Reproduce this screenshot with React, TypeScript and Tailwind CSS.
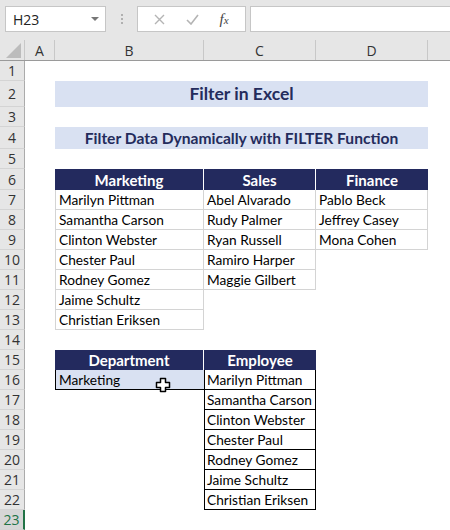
import React from "react";

const NAVY = "bg-[#232a5e]";

type Kind = "head" | "headLast" | "data" | "dataFirst" | "dept" | "emp";

interface CellDef {
  text?: string;
  kind: Kind;
}

const widths = {
  b: "w-[149px]",
  c: "w-[112px]",
  d: "w-[112px]",
};

const rowHeights: Record<number, string> = {
  2: "h-[26px]",
  4: "h-[22px]",
  6: "h-[21px]",
};

const marketing = ["Marilyn Pittman", "Samantha Carson", "Clinton Webster", "Chester Paul", "Rodney Gomez", "Jaime Schultz", "Christian Eriksen"];
const sales = ["Abel Alvarado", "Rudy Palmer", "Ryan Russell", "Ramiro Harper", "Maggie Gilbert"];
const finance = ["Pablo Beck", "Jeffrey Casey", "Mona Cohen"];

function kindClass(kind: Kind) {
  switch (kind) {
    case "head":
      return `${NAVY} text-white font-bold text-[15px] justify-center border-r border-white`;
    case "headLast":
      return `${NAVY} text-white font-bold text-[15px] justify-center`;
    case "dataFirst":
      return "border-l border-r border-b border-[#d4d4d4] pl-[3px] text-[13.7px]";
    case "data":
      return "border-r border-b border-[#d4d4d4] pl-[3px] text-[13.7px]";
    case "dept":
      return "bg-[#d9e1f2] border-l border-b border-black pl-[3px] text-[13.7px]";
    case "emp":
      return "border-l border-r border-b border-black pl-[2px] text-[13.7px]";
  }
}

function Cell({ w, def }: { w: string; def?: CellDef }) {
  const k = def ? kindClass(def.kind) : "";
  return (
    <div className={`${w} h-full flex items-center pt-[1px] shrink-0 text-black whitespace-nowrap overflow-visible ${k}`}>
      {def?.text}
    </div>
  );
}

function rowCells(r: number): { b?: CellDef; c?: CellDef; d?: CellDef } {
  if (r === 6) return { b: { text: "Marketing", kind: "head" }, c: { text: "Sales", kind: "head" }, d: { text: "Finance", kind: "headLast" } };
  if (r >= 7 && r <= 13) {
    const i = r - 7;
    return {
      b: { text: marketing[i], kind: "dataFirst" },
      c: sales[i] ? { text: sales[i], kind: "data" } : undefined,
      d: finance[i] ? { text: finance[i], kind: "data" } : undefined,
    };
  }
  if (r === 15) return { b: { text: "Department", kind: "head" }, c: { text: "Employee", kind: "headLast" } };
  if (r >= 16 && r <= 22) {
    return {
      b: r === 16 ? { text: "Marketing", kind: "dept" } : undefined,
      c: { text: marketing[r - 16], kind: "emp" },
    };
  }
  return {};
}

function SheetRow({ r }: { r: number }) {
  const h = rowHeights[r] ?? "h-[20px]";
  const selected = r === 23;
  const cells = rowCells(r);
  return (
    <div className={`flex ${h}`}>
      <div
        className={`w-[25px] shrink-0 flex items-center justify-center border-b border-[#d4d4d4] text-[14px] font-['Open_Sans',sans-serif] ${
          selected ? "bg-[#d6d6d6] text-[#217346] border-r-2 border-r-[#217346]" : "bg-[#e6e6e6] text-[#333] border-r border-r-[#ababab]"
        }`}
      >
        {r}
      </div>
      <div className="w-[30px] shrink-0" />
      {r === 2 || r === 4 ? (
        <div
          className={`w-[373px] h-full bg-[#d9e1f2] flex items-center justify-center pt-[1px] font-bold text-[#242c5c] ${
            r === 2 ? "text-[17.5px]" : "text-[15.6px]"
          }`}
        >
          {r === 2 ? "Filter in Excel" : "Filter Data Dynamically with FILTER Function"}
        </div>
      ) : (
        <>
          <Cell w={widths.b} def={cells.b} />
          <Cell w={widths.c} def={cells.c} />
          <Cell w={widths.d} def={cells.d} />
        </>
      )}
      <div className="flex-1" />
    </div>
  );
}

function CrossCursor() {
  return (
    <svg width="16" height="16" viewBox="0 0 16 16" className="absolute left-[155px] top-[377px]">
      <path
        d="M5.5 1.5h5v4h4v5h-4v4h-5v-4h-4v-5h4z"
        fill="#fff"
        stroke="#000"
        strokeWidth="1.5"
        strokeLinejoin="round"
      />
    </svg>
  );
}

export default function App() {
  const rows = Array.from({ length: 23 }, (_, i) => i + 1);
  return (
    <div className="relative w-[450px] h-[530px] overflow-hidden bg-white font-['Lato','Open_Sans',sans-serif]">
      {/* formula bar */}
      <div className="h-[40px] bg-[#e6e6e6] flex items-start pt-[6px] pl-[5px] font-['Open_Sans',sans-serif]">
        <div className="w-[101px] h-[26px] bg-white border border-[#c6c6c6] flex items-center pl-[7px] pr-[6px] text-[14px] text-[#222]">
          <span className="flex-1">H23</span>
          <span className="w-0 h-0 border-l-[4px] border-r-[4px] border-t-[4px] border-l-transparent border-r-transparent border-t-[#777]" />
        </div>
        <div className="w-[31px] h-[26px] flex flex-col items-center justify-center gap-[2px]">
          <span className="w-[2px] h-[2px] bg-[#b0b0b0]" />
          <span className="w-[2px] h-[2px] bg-[#b0b0b0]" />
          <span className="w-[2px] h-[2px] bg-[#b0b0b0]" />
        </div>
        <div className="w-[109px] h-[26px] bg-white border border-[#c6c6c6] flex items-center justify-around px-[6px]">
          <svg width="11" height="11" viewBox="0 0 11 11">
            <path d="M1 1l9 9M10 1l-9 9" stroke="#b4b4b4" strokeWidth="1.4" />
          </svg>
          <svg width="13" height="11" viewBox="0 0 13 11">
            <path d="M1 6l4 4 7-9" stroke="#b4b4b4" strokeWidth="1.6" fill="none" />
          </svg>
          <span className="font-['Liberation_Serif',serif] italic text-[15px] text-[#444] leading-none">
            f<span className="text-[11px]">x</span>
          </span>
        </div>
        <div className="ml-[4px] flex-1 h-[26px] bg-white border border-[#c6c6c6] border-r-0" />
      </div>

      {/* column headers */}
      <div className="flex h-[21px] bg-[#e6e6e6] border-b border-[#9a9a9a] text-[14px] text-[#333] font-['Open_Sans',sans-serif]">
        <div className="w-[25px] shrink-0 relative border-r border-[#c8c8c8]">
          <svg width="17" height="17" viewBox="0 0 17 17" className="absolute left-[5px] top-[2px]">
            <path d="M16 1L16 16L1 16Z" fill="#bcbcbc" />
          </svg>
        </div>
        <div className="w-[30px] shrink-0 flex items-center justify-center border-r border-[#c8c8c8]">A</div>
        <div className="w-[149px] shrink-0 flex items-center justify-center border-r border-[#c8c8c8]">B</div>
        <div className="w-[112px] shrink-0 flex items-center justify-center border-r border-[#c8c8c8]">C</div>
        <div className="w-[112px] shrink-0 flex items-center justify-center border-r border-[#c8c8c8]">D</div>
        <div className="flex-1" />
      </div>

      {rows.map((r) => (
        <SheetRow key={r} r={r} />
      ))}

      <CrossCursor />
    </div>
  );
}
